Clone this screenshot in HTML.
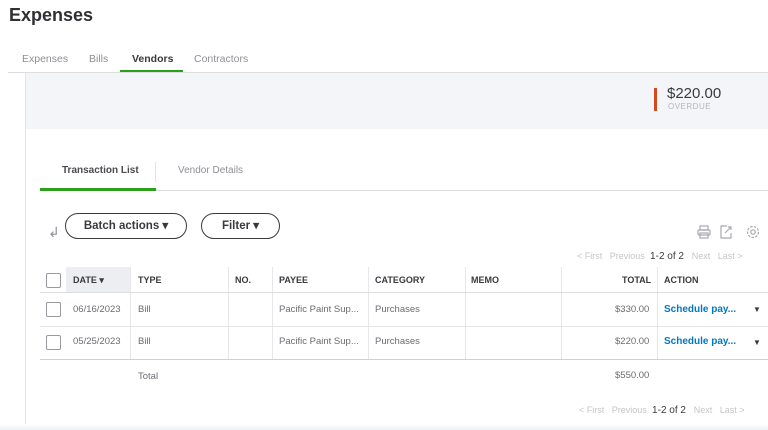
<!DOCTYPE html>
<html><head><meta charset="utf-8"><style>
*{margin:0;padding:0;box-sizing:border-box}
body{width:768px;height:430px;overflow:hidden;background:#fff;font-family:"Liberation Sans",sans-serif;color:#393a3d;position:relative}
.a{position:absolute;white-space:nowrap}
.th{font-size:9px;font-weight:bold;color:#393a3d;top:275px}
.td{font-size:9.5px;color:#6b6c72}
.vl{position:absolute;width:1px;background:#e6e7ea}
.cb{position:absolute;width:15px;height:15px;border:1px solid #9a9ba0;border-radius:2px;background:#fff;left:46px}
.pg{font-size:9px;color:#c4c5c8}
</style></head><body>
<div class="a" style="left:9px;top:5px;font-size:18px;font-weight:bold;color:#2f3033">Expenses</div>
<div class="a" style="left:22px;top:53px;font-size:10.5px;color:#8d9096">Expenses</div>
<div class="a" style="left:89px;top:53px;font-size:10.5px;color:#8d9096">Bills</div>
<div class="a" style="left:132px;top:53px;font-size:10.5px;font-weight:bold;color:#393a3d">Vendors</div>
<div class="a" style="left:120px;top:70px;width:63px;height:3px;background:#2ca01c"></div>
<div class="a" style="left:194px;top:53px;font-size:10.5px;color:#8d9096">Contractors</div>
<div class="a" style="left:8px;top:72px;width:760px;height:1px;background:#dcdde0"></div>
<div class="a" style="left:25px;top:73px;width:1px;height:357px;background:#e3e4e7"></div>
<div class="a" style="left:26px;top:73px;width:742px;height:56px;background:#f4f5f8"></div>
<div class="a" style="left:654px;top:88px;width:3px;height:23px;background:#d4471f"></div>
<div class="a" style="left:667px;top:85px;font-size:15px;color:#393a3d">$220.00</div>
<div class="a" style="left:668px;top:102px;font-size:8px;color:#b5b6ba;letter-spacing:.5px">OVERDUE</div>
<div class="a" style="left:62px;top:165px;font-size:10px;font-weight:bold;color:#4a4b4f">Transaction List</div>
<div class="a" style="left:155px;top:162px;width:1px;height:20px;background:#e3e4e7"></div>
<div class="a" style="left:178px;top:165px;font-size:10px;color:#8d9096">Vendor Details</div>
<div class="a" style="left:40px;top:190px;width:728px;height:1px;background:#dcdde0"></div>
<div class="a" style="left:40px;top:188px;width:116px;height:3px;background:#2ca01c"></div>
<div class="a" style="left:48px;top:224px;font-size:14px;color:#8d9096">↲</div>
<div class="a" style="left:65px;top:213px;width:122px;height:26px;border:1.5px solid #393a3d;border-radius:13px;font-size:11.5px;font-weight:bold;text-align:center;line-height:25px">Batch actions ▾</div>
<div class="a" style="left:201px;top:213px;width:79px;height:26px;border:1.5px solid #393a3d;border-radius:13px;font-size:11.5px;font-weight:bold;text-align:center;line-height:25px">Filter ▾</div>
<svg class="a" style="left:697px;top:224px" width="64" height="16" viewBox="0 0 64 16" fill="none" stroke="#a8a9ad" stroke-width="1.2">
<rect x="3" y="2" width="8" height="4"/><rect x="1" y="6" width="12" height="5" rx="1"/><rect x="3" y="9" width="8" height="5"/>
<path d="M30 2h-6v12h10v-5M28 9l6-6M31 3h3v3"/>
<circle cx="56" cy="8" r="2.2"/><circle cx="56" cy="8" r="5.5" stroke-dasharray="2.5 1.3"/>
</svg>
<div class="a pg" style="left:577px;top:251px">&lt; First &nbsp; Previous <span style="color:#393a3d;font-size:10px">&nbsp;1-2 of 2&nbsp;</span> &nbsp;Next &nbsp; Last &gt;</div>
<div class="a" style="left:66px;top:267px;width:64px;height:25px;background:#eceef1"></div>
<div class="cb" style="top:273px"></div>
<div class="a th" style="left:73px">DATE ▾</div>
<div class="a th" style="left:138px">TYPE</div>
<div class="a th" style="left:235px">NO.</div>
<div class="a th" style="left:279px">PAYEE</div>
<div class="a th" style="left:375px">CATEGORY</div>
<div class="a th" style="left:471px">MEMO</div>
<div class="a th" style="left:622px">TOTAL</div>
<div class="a th" style="left:664px">ACTION</div>
<div class="vl" style="left:130px;top:267px;height:92px"></div>
<div class="vl" style="left:228px;top:267px;height:92px"></div>
<div class="vl" style="left:272px;top:267px;height:92px"></div>
<div class="vl" style="left:368px;top:267px;height:92px"></div>
<div class="vl" style="left:465px;top:267px;height:92px"></div>
<div class="vl" style="left:561px;top:267px;height:92px"></div>
<div class="vl" style="left:657px;top:267px;height:92px"></div>
<div class="a" style="left:40px;top:292px;width:728px;height:1px;background:#dcdde0"></div>
<div class="a" style="left:40px;top:326px;width:728px;height:1px;background:#e6e7ea"></div>
<div class="a" style="left:40px;top:359px;width:728px;height:1px;background:#cfd0d3"></div>
<div class="cb" style="top:302px"></div>
<div class="a td" style="left:73px;top:304px">06/16/2023</div>
<div class="a td" style="left:138px;top:304px">Bill</div>
<div class="a td" style="left:279px;top:304px">Pacific Paint Sup...</div>
<div class="a td" style="left:375px;top:304px">Purchases</div>
<div class="a td" style="left:615px;top:304px">$330.00</div>
<div class="a" style="left:664px;top:304px;font-size:10px;font-weight:bold;color:#0077c5">Schedule pay...</div>
<div class="a" style="left:753px;top:305px;font-size:8px;color:#393a3d">▼</div>
<div class="cb" style="top:335px"></div>
<div class="a td" style="left:73px;top:336px">05/25/2023</div>
<div class="a td" style="left:138px;top:336px">Bill</div>
<div class="a td" style="left:279px;top:336px">Pacific Paint Sup...</div>
<div class="a td" style="left:375px;top:336px">Purchases</div>
<div class="a td" style="left:615px;top:336px">$220.00</div>
<div class="a" style="left:664px;top:336px;font-size:10px;font-weight:bold;color:#0077c5">Schedule pay...</div>
<div class="a" style="left:753px;top:338px;font-size:8px;color:#393a3d">▼</div>
<div class="a td" style="left:138px;top:371px">Total</div>
<div class="a td" style="left:615px;top:370px">$550.00</div>
<div class="a pg" style="left:579px;top:405px">&lt; First &nbsp; Previous <span style="color:#393a3d;font-size:10px">&nbsp;1-2 of 2&nbsp;</span> &nbsp;Next &nbsp; Last &gt;</div>
<div class="a" style="left:0;top:424px;width:768px;height:6px;background:linear-gradient(#fff,#eef0f2)"></div>
</body></html>
